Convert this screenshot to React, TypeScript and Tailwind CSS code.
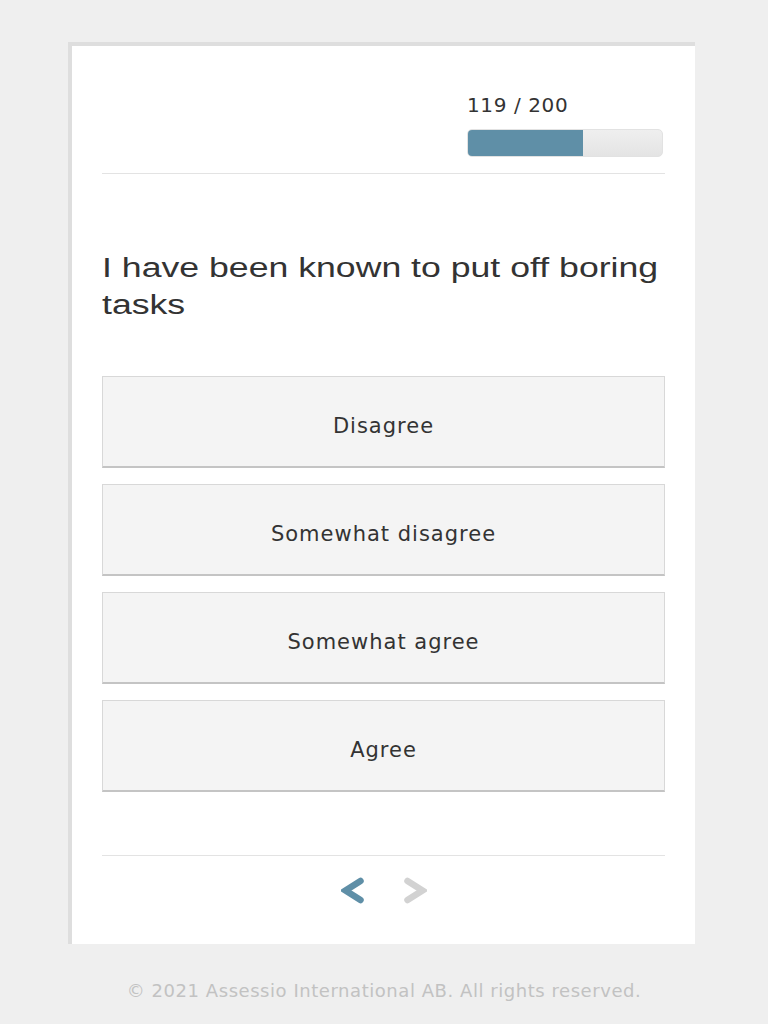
import React from 'react';

const options = ['Disagree', 'Somewhat disagree', 'Somewhat agree', 'Agree'];

function Chevron({ dir, color }: { dir: 'left' | 'right'; color: string }) {
  const d = dir === 'left' ? 'M19.5 4 L4.5 13.5 L19.5 23' : 'M3.5 4 L18.5 13.5 L3.5 23';
  return (
    <svg width="23" height="27" viewBox="0 0 23 27" fill="none">
      <path d={d} stroke={color} strokeWidth="6.5" strokeLinecap="round" strokeLinejoin="miter" />
    </svg>
  );
}

export default function App() {
  const current = 119;
  const total = 200;

  return (
    <div className="min-h-[1024px] bg-[#efefef] pt-[42px]" style={{ fontFamily: '"DejaVu Sans", "Open Sans", sans-serif' }}>
      {/* Card */}
      <div className="ml-[68px] w-[627px] border-l-[4px] border-t-[4px] border-[#dedede] bg-white">
        <div className="px-[30px] pt-[45px] pb-[40px]">
          {/* Progress */}
          <div className="flex justify-end pr-[2px]">
            <div className="w-[196px]">
              <div className="text-[20px] leading-[28px] tracking-[0.6px] text-[#333]">
                {current} / {total}
              </div>
              <div className="mt-[10px] h-[28px] overflow-hidden rounded-[5px] border border-[#e2e2e2] bg-gradient-to-b from-[#efefef] to-[#e4e4e4]">
                <div className="h-full bg-[#5f8fa7]" style={{ width: `${(current / total) * 100}%` }} />
              </div>
            </div>
          </div>
          <div className="mt-[16px] h-px bg-[#e3e3e3]" />

          {/* Question */}
          <h1
            className="mt-[76px] w-[426px] origin-left scale-x-[1.32] text-[27px] leading-[37px] text-[#333]"
            style={{ fontFamily: '"Liberation Sans", Arial, sans-serif' }}
          >
            I have been known to put off boring tasks
          </h1>

          {/* Options */}
          <div className="mt-[52px] flex flex-col gap-[16px]">
            {options.map((o) => (
              <button
                key={o}
                className="flex h-[92px] w-full items-center justify-center border border-b-2 border-[#d8d8d8] border-b-[#c4c4c4] bg-[#f4f4f4] pt-[11px] text-[21px] tracking-[1px] text-[#333]"
              >
                {o}
              </button>
            ))}
          </div>

          <div className="mt-[63px] h-px bg-[#e3e3e3]" />

          {/* Navigation */}
          <div className="mt-[21px] flex justify-center gap-[40px]">
            <Chevron dir="left" color="#5f8fa7" />
            <Chevron dir="right" color="#d2d2d2" />
          </div>
        </div>
      </div>

      <div className="mt-[33px] text-center text-[18px] tracking-[0.55px] text-[#c2c2c2]">
        © 2021 Assessio International AB. All rights reserved.
      </div>
    </div>
  );
}
